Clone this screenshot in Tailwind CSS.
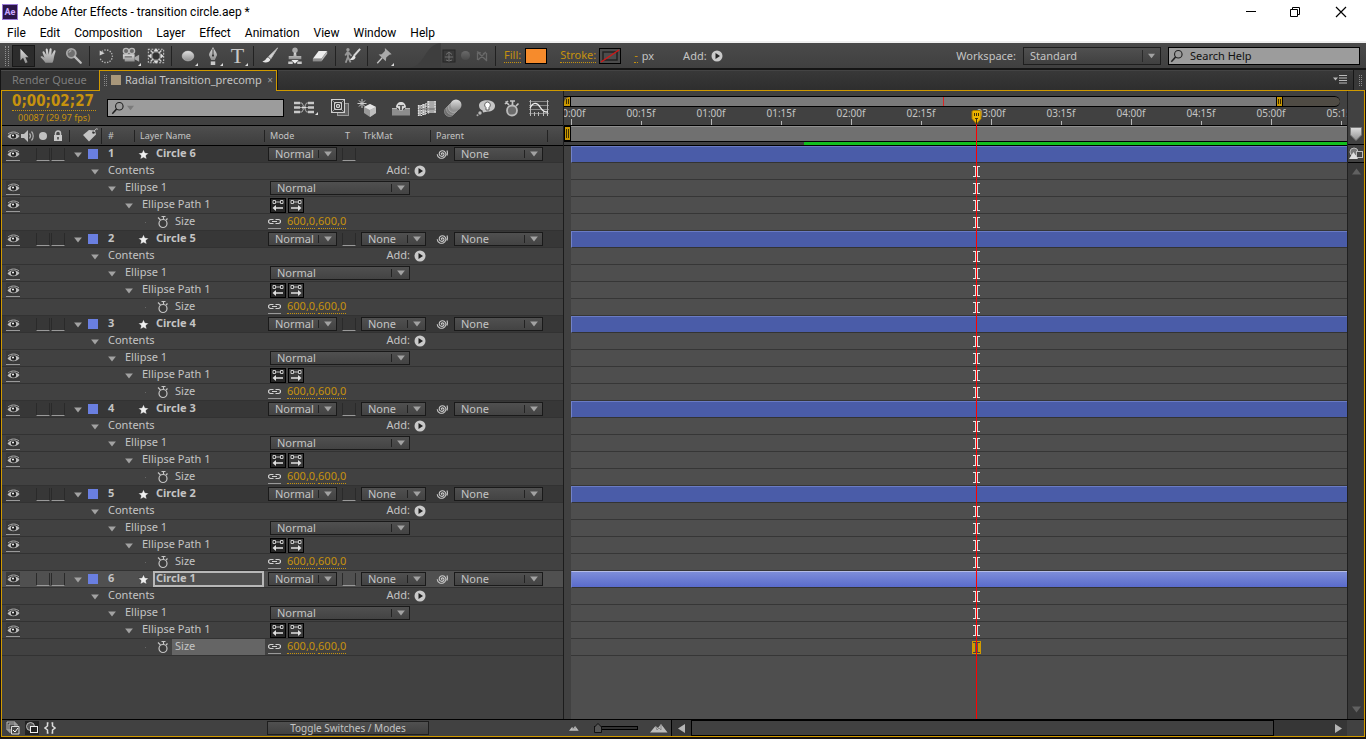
<!DOCTYPE html>
<html lang="en">
<head>
  <meta charset="UTF-8" />
  <meta name="viewport" content="width=device-width, initial-scale=1.0" />
  <title>Adobe After Effects - transition circle.aep *</title>
  <script src="https://cdn.jsdelivr.net/npm/@tailwindcss/browser@4"></script>
</head>
<body class="relative min-h-screen flex flex-col bg-[#171213] pb-[2px] text-[11px] leading-4 text-[#c4c4c4] font-['Noto_Sans','Open_Sans',sans-serif] overflow-x-hidden">

  <!-- icon sprite, kept rendered at zero size so the gradient stays usable -->
  <svg class="absolute w-0 h-0" aria-hidden="true">
    <defs>
      <linearGradient id="metal" x1="0" y1="0" x2="0" y2="1"><stop offset="0" stop-color="#dedede"/><stop offset="1" stop-color="#8f8f8f"/></linearGradient>
    </defs>
    <symbol id="i-arrow" viewBox="0 0 20 20"><path d="M6 2v13l3-3 2.500 6 2.500-1-2.500-5.500H15z" fill="url(#metal)"/></symbol>
    <symbol id="i-hand" viewBox="0 0 20 20"><path d="M6 17.500c-1-2-3.500-4-5.500-6.500 1-1.300 3-.3 4.500 1.200L2.800 6c0-1.400 1.600-1.700 2.200-.4L7 9 6.300 2.700c.2-1.500 2-1.400 2.300 0L9.700 8.500l1-6.300c.5-1.400 2.200-1 2.200.4L12.700 9l2.700-4.800c.8-1 2.200-.3 1.800 1-1 3.400-1.600 5-2 8.300-.2 1.600-.9 3-1.400 4z" fill="url(#metal)"/></symbol>
    <symbol id="i-zoom" viewBox="0 0 20 20"><circle cx="7" cy="7" r="5" fill="#6e6e6e" stroke="#a5a5a5" stroke-width="2"/><path d="M4.500 6c.5-1 1.500-1.700 2.500-1.700" stroke="#ddd" fill="none"/><path d="M11 11 17.500 17.500" stroke="#bdbdbd" stroke-width="2.600" stroke-linecap="round"/></symbol>
    <symbol id="i-rotate" viewBox="0 0 20 20"><path d="M5.500 5A7 7 0 1 1 3.300 12" fill="none" stroke="#b4b4b4" stroke-width="1.500" stroke-dasharray="1.500 1.500"/><path d="M3 9.500 3 4l5.500 3z" fill="#d0d0d0"/></symbol>
    <symbol id="i-camera" viewBox="0 0 20 20"><circle cx="4.500" cy="4.500" r="3" fill="#6a6a6a" stroke="#b8b8b8" stroke-width="1.500"/><circle cx="11" cy="4.500" r="3" fill="#6a6a6a" stroke="#b8b8b8" stroke-width="1.500"/><path d="M1 8h13v8H3v-2.500H1z" fill="url(#metal)"/><path d="m14 11.500 5-3v8l-5-3z" fill="#a9a9a9"/><path d="M3 11h8" stroke="#444"/></symbol>
    <symbol id="i-pan" viewBox="0 0 20 20"><rect x="1.500" y="2.500" width="17" height="15" fill="none" stroke="#c4c4c4" stroke-width="1.200" stroke-dasharray="2 1.500"/><circle cx="10" cy="10" r="4.500" fill="#333" stroke="#9a9a9a"/><path d="m10 1.500 3 3.500H7zM10 18.500l3-3.500H7zM1.500 10 5 7v6zM18.500 10 15 7v6z" fill="#ddd"/><path d="m4 4 3 3m9-3-3 3m-9 9 3-3m9 3-3-3" stroke="#ccc" stroke-width="1.500"/></symbol>
    <symbol id="i-ellipse" viewBox="0 0 20 20"><ellipse cx="10" cy="10" rx="6.500" ry="5.500" fill="url(#metal)" stroke="#d5d5d5" stroke-width=".5"/></symbol>
    <symbol id="i-pen" viewBox="0 0 20 20"><path d="M10 0c1 3 4.500 6 4.500 9L12 14.500H8L5.500 9c0-3 3.500-6 4.500-9z" fill="url(#metal)"/><path d="M10 2v7" stroke="#333"/><circle cx="10" cy="9.500" r="1.200" fill="#333"/><path d="M7.500 16h5v4h-5z" fill="#c9c9c9"/></symbol>
    <symbol id="i-brush" viewBox="0 0 20 20"><path d="M18.500 1 8.500 10.500l2.500 2.500z" fill="#d4d4d4" stroke="#bbb"/><path d="M8 11.500c-2.500.3-2.500 4-6.500 4.500 2.500 2 8 1.500 9-2z" fill="#e5e5e5"/></symbol>
    <symbol id="i-stamp" viewBox="0 0 20 20"><circle cx="10" cy="3.500" r="3" fill="#aaa"/><path d="M8.800 6h2.400l.5 4H17v3.500H3V10h5.300z" fill="url(#metal)"/><path d="M2.500 17.500h5m5 0h5" stroke="#c8c8c8" stroke-width="3"/><path d="m6 14.500 4 4 4-4z" fill="#eee"/></symbol>
    <symbol id="i-eraser" viewBox="0 0 20 20"><path d="M8.500 4.500H18L11.500 13H2z" fill="#ededed"/><path d="M2 13h9.500v3H2z" fill="#8e8e8e"/><path d="M11.500 13 18 4.500v3L11.500 16z" fill="#b5b5b5"/></symbol>
    <symbol id="i-roto" viewBox="0 0 20 20"><circle cx="5.500" cy="3" r="1.900" fill="#9b9b9b"/><path d="M5.500 5 2.500 9.500M5.500 5v6L3 17.500M5.500 11l3 6M6 6l3.500 4" stroke="#989898" stroke-width="2" fill="none"/><path d="m19 2-7 8" stroke="#d5d5d5" stroke-width="2.200"/><path d="M12.500 9.500c-2.500 0-2 3.500-5 4 2 1.800 6 1.200 6.500-2.300z" fill="#e3e3e3"/></symbol>
    <symbol id="i-pin" viewBox="0 0 20 20"><path d="m11 1 7.500 7-2.500.6-3.500 3.200-.5 4L4 8.300l3.500-.3 3.500-3.500z" fill="#aaa"/><path d="m8 12-5.500 6" stroke="#c4c4c4" stroke-width="1.500"/></symbol>
    <symbol id="i-anchor" viewBox="0 0 16 16"><rect x="2" y="2" width="12" height="12" fill="#393939" stroke="#272727"/><path d="M8 4v8M5 6.500l3-2.500 3 2.500M3.800 9h8.400M5 12l3 1 3-1" stroke="#707070" fill="none"/></symbol>
    <symbol id="i-unlink" viewBox="0 0 16 16"><path d="m3 3.500 10 9.500M4 12l8-8M3.500 5v7M12.500 5v7M4 4l3 1m5-1L9 6" stroke="#686868" stroke-width="1.300" fill="none"/></symbol>
    <symbol id="i-search" viewBox="0 0 16 16"><circle cx="9.500" cy="6" r="4.300" fill="none" stroke="#222" stroke-width="1.300"/><path d="m6.500 9-5 5.500" stroke="#222" stroke-width="1.700"/></symbol>
    <symbol id="i-play" viewBox="0 0 12 12"><circle cx="6" cy="6" r="5.500" fill="#c9c9c9"/><path d="M4.500 3 9 6 4.500 9z" fill="#222"/></symbol>
    <symbol id="i-flow" viewBox="0 0 24 20"><path d="M0 5h6M0 9.500h6M0 14h6M14 5h6M14 9.500h6M14 14h6" stroke="#c8c8c8" stroke-width="2.500"/><path d="M6 5h2l1.500 3M6 14h2l1.500-3M14 5h-1.500L11 8m3 6h-1.500L11 11M6 9.500h8" stroke="#aaa" fill="none"/><path d="M8 8.500h4v2H8z" fill="#ddd"/><path d="M24 14v3h-3z" fill="#ddd"/></symbol>
    <symbol id="i-comps" viewBox="0 0 20 20"><rect x="7.500" y="5.500" width="11" height="12" fill="#606060" stroke="#999"/><rect x="1.500" y="1.500" width="13" height="13" fill="#3c3c3c" stroke="#d0d0d0"/><rect x="4.500" y="4.500" width="7" height="7" fill="none" stroke="#d0d0d0"/><path d="m2 2 12 12m0-12L2 14" stroke="#aaa" stroke-width=".7"/><circle cx="8" cy="8" r="1.500" fill="#3c3c3c" stroke="#eee"/></symbol>
    <symbol id="i-cube" viewBox="0 0 20 20"><path d="M5 1v9M.5 5.500h9M2 2.500l6 6m0-6-6 6" stroke="#ccc"/><path d="m13 6 6 3v6l-6 4-6-4V9z" fill="#9a9a9a"/><path d="m13 6 6 3-6 3-6-3z" fill="#e4e4e4"/><path d="m13 12 6-3v6l-6 4z" fill="#bdbdbd"/></symbol>
    <symbol id="i-shy" viewBox="0 0 20 20"><path d="M1 10h4.500c1 3 8 3 9 0H19v7.500H1z" fill="#8d8d8d"/><path d="M1 10.500h5M14 10.500h5" stroke="#b5b5b5"/><path d="M5 9.500c0-7.500 10-7.500 10 0-2 .3-3 1-3.500 3h-3C8 10.500 7 9.800 5 9.500z" fill="#dcdcdc"/><path d="M10 7v5" stroke="#333" stroke-width="1.500"/><circle cx="8" cy="7.500" r=".8" fill="#333"/><circle cx="12" cy="7.500" r=".8" fill="#333"/></symbol>
    <symbol id="i-film" viewBox="0 0 20 20"><path d="M1 7h3v11H1zM5 6h4v11H5zM10 3h9v12h-9z" fill="#a8a8a8"/><path d="M1.500 7v11M4.500 7v11M6.500 6v11M9 5v11M11.500 3v13M18 3v12" stroke="#e3e3e3" stroke-width="1.300" stroke-dasharray="1.500 1"/><path d="M2 11h16" stroke="#555" stroke-width=".8"/></symbol>
    <symbol id="i-blur" viewBox="0 0 20 20"><circle cx="6.500" cy="13.500" r="5" fill="#6d6d6d" stroke="#999" stroke-width=".7"/><circle cx="8.500" cy="11.500" r="5" fill="#808080" stroke="#a5a5a5" stroke-width=".7"/><circle cx="10.500" cy="9.500" r="5" fill="#909090" stroke="#b5b5b5" stroke-width=".7"/><circle cx="13" cy="7" r="5.500" fill="url(#metal)"/></symbol>
    <symbol id="i-brain" viewBox="0 0 20 20"><path d="M3 7.500c0-7 15.500-7 16 0 .2 4-3.500 6-7 6l-5 1-.5-2C4.500 12 3 10 3 7.500z" fill="#c6c6c6"/><path d="M11.500 4a3 3 0 0 1 1.500 5.500V12h-3V9.500A3 3 0 0 1 11.500 4z" fill="#fff" stroke="#444" stroke-width=".8"/><circle cx="4" cy="15" r="1.700" fill="#bbb"/><circle cx="1.500" cy="17.300" r="1" fill="#aaa"/></symbol>
    <symbol id="i-watch" viewBox="0 0 20 20"><circle cx="10" cy="12.500" r="5" fill="#6c6c6c" stroke="#bbb" stroke-width="1.800"/><path d="M8 3h5M10.500 3v4M3.500 3.500 7 7M14 8l2.500-2.500M3 6l3-3" stroke="#c4c4c4" stroke-width="1.700"/></symbol>
    <symbol id="i-stopwatch" viewBox="0 0 14 14"><circle cx="7" cy="8.500" r="4" fill="#3a3a3a" stroke="#c4c4c4" stroke-width="1.200"/><path d="M5.500 1.500h4M7.500 1.500V4M2 2.500l2.500 2.500M10 5l1.500-1.500" stroke="#c4c4c4" stroke-width="1.200"/></symbol>
    <symbol id="i-graph" viewBox="0 0 20 20"><path d="M0 3.500h20M0 7.500h20M0 11.500h20M0 15.500h20" stroke="#888"/><path d="M1.500 2v16M5.500 14v4m4-4v4m5-4v4m4-16v16" stroke="#bbb"/><path d="M1 10C4 4 8 4 11 9s5 5 8 5" fill="none" stroke="#eee" stroke-width="1.400"/></symbol>
    <symbol id="i-eye" viewBox="0 0 13 10"><path d="M.5 5.500C3 1.500 9 .8 12.500 5 9.500 9 4 9.500.5 5.500z" fill="#bdbdbd"/><circle cx="6.500" cy="5" r="2.600" fill="#222"/><circle cx="6" cy="4.500" r="1" fill="#fff"/><path d="M1 3C4 .5 9 .2 12 3" fill="none" stroke="#aaa"/></symbol>
    <symbol id="i-speaker" viewBox="0 0 13 12"><path d="M0 4h3l4-4v12L3 8H0z" fill="#c0c0c0"/><path d="M8.500 3.500c1.300 1.500 1.300 3.500 0 5M10.500 1.500c2.300 2.500 2.300 6.500 0 9" fill="none" stroke="#b0b0b0" stroke-width="1.200"/></symbol>
    <symbol id="i-lock" viewBox="0 0 10 12"><path d="M2.500 6V3.500a2.500 2.500 0 0 1 5 0V6" fill="none" stroke="#c0c0c0" stroke-width="1.500"/><path d="M1 5h8v6H1z" fill="#c8c8c8"/><path d="M5 7v2.500" stroke="#333" stroke-width="1.400"/></symbol>
    <symbol id="i-tag" viewBox="0 0 16 14"><path d="M1 7 7 2l6 .5 1 4-7 7z" fill="#c4c4c4"/><circle cx="11.500" cy="4.500" r="1.300" fill="#333"/><path d="M12 4c1-3 3-4 4-2.500" stroke="#ccc" fill="none"/></symbol>
    <symbol id="i-star" viewBox="0 0 12 12"><path d="m6 .5 1.600 3.600 4 .4-3 2.700.9 4L6 9.200l-3.500 2 .9-4-3-2.700 4-.4z" fill="#efefef" stroke="#222" stroke-width=".4"/></symbol>
    <symbol id="i-down" viewBox="0 0 9 7"><path d="M0 .5h9L4.500 6.500z" fill="#a2a2a2"/></symbol>
    <symbol id="i-whip" viewBox="0 0 12 12"><path d="M6.300 6.300c-1 .5-1.500-1-.3-1.400 1.500-.3 2.500 1.300 1.700 2.500-1.100 1.600-4 1-4.400-1C2.900 4.200 4.700 2.600 6.700 2.800c2.400.3 3.700 2.500 3 4.600-.8 2.400-3.700 3.400-5.900 2.500C2.300 9.200 1.300 7.800 1.200 6.200M11 2.500c.6 1.800.5 3.600 0 5" fill="none" stroke="#cacaca" stroke-width="1.100"/></symbol>
    <symbol id="i-link" viewBox="0 0 13 7"><path d="M5.500 1.500h-3a2 2 0 0 0 0 4h3M7.500 1.500h3a2 2 0 0 1 0 4h-3M4 3.500h5" fill="none" stroke="#d0d0d0" stroke-width="1.200"/></symbol>
    <symbol id="i-pathl" viewBox="0 0 12 11"><path d="M3 2h6" stroke="#c8c8c8"/><path d="M1 .5h2.500v3H1zM8.500.5H11v3H8.500z" fill="#222" stroke="#c8c8c8"/><path d="M2 8h9" stroke="#e0e0e0" stroke-width="1.500"/><path d="M4 5v6L.5 8z" fill="#e0e0e0"/></symbol>
    <symbol id="i-pathr" viewBox="0 0 12 11"><path d="M3 2h6" stroke="#c8c8c8"/><path d="M1 .5h2.500v3H1zM8.500.5H11v3H8.500z" fill="#222" stroke="#c8c8c8"/><path d="M1 8h9" stroke="#e0e0e0" stroke-width="1.500"/><path d="M8 5v6l3.500-3z" fill="#e0e0e0"/></symbol>
    <symbol id="i-beam" viewBox="0 0 7 11"><path d="M0 .5h7M0 10.500h7" stroke="#e6e6e6"/><path d="M2.500 1v9m2-9v9" stroke="#dcdcdc"/></symbol>
    <symbol id="i-beamkey" viewBox="0 0 9 13"><path d="M0 0h9v13H0z" fill="#d09a00"/><path d="M1 1.500h7M1 11.500h7" stroke="#444"/><path d="M3.500 2v9m2-9v9" stroke="#555"/></symbol>
    <symbol id="i-mountain" viewBox="0 0 18 9"><path d="M0 8.500 5.500 2 8 4l3-4 6.500 8.500z" fill="#bcbcbc"/><path d="m5.500 2 1.500 4 2-2 2 2 0-6" fill="none" stroke="#777" stroke-width=".8"/></symbol>
  </svg>

  <!-- title bar -->
  <header class="bg-white text-black text-[12px] font-['Roboto','Open_Sans',sans-serif]">
    <div class="flex items-center h-[23px] pl-[2px]">
      <div class="w-4 h-4 bg-[#2b1648] border border-[#9a7bd6] text-[#c9a6ff] text-[9px] leading-[14px] font-bold text-center">Ae</div>
      <h1 class="ml-[5px]">Adobe After Effects - transition circle.aep *</h1>
      <div class="ml-auto flex items-center pr-[17px] gap-8">
        <button aria-label="Minimize"><svg class="size-3" viewBox="0 0 12 12"><path d="M1 5.500h10" stroke="#000"/></svg></button>
        <button aria-label="Restore"><svg class="size-3" viewBox="0 0 12 12"><path d="M1.500 3.500h7v7h-7zM3.500 3.500v-2h7v7h-2" fill="none" stroke="#000"/></svg></button>
        <button aria-label="Close"><svg class="size-4" viewBox="0 0 16 16"><path d="m3 3 10 10M13 3 3 13" stroke="#000" stroke-width="1.200"/></svg></button>
      </div>
    </div>
    <nav class="flex h-[20px] pl-[7px] gap-[14px] leading-5 border-b-2 border-[#f0f0f0]">
      <a href="#">File</a><a href="#">Edit</a><a href="#">Composition</a><a href="#">Layer</a><a href="#">Effect</a><a href="#">Animation</a><a href="#">View</a><a href="#">Window</a><a href="#">Help</a>
    </nav>
  </header>

  <!-- tools -->
  <div id="toolbar" class="flex items-center h-[25px] bg-linear-to-b from-[#4a4a4a] to-[#404040] pl-[5px] pr-[6px] text-[11px]">
    <div class="w-[4px] h-5 mr-[2px] border-x border-dotted border-[#909090]"></div>
    <div id="tools" class="flex items-center"></div>
    <svg class="w-[45px] h-[25px] shrink-0" viewBox="0 0 45 25"><path d="M14 25C30 22 28 2 45 0v25z" fill="#3e3e3e"/></svg>
    <svg class="size-4"><use href="#i-anchor"/></svg>
    <div class="size-[9px] mx-[4px] rounded-full bg-linear-to-b from-[#6a6a6a] to-[#4a4a4a]"></div>
    <svg class="size-4"><use href="#i-unlink"/></svg>
    <div class="w-px h-5 ml-[5px] mr-[8px] bg-[#202020]"></div>
    <button class="leading-[14px] text-[#c6920e] border-b border-dotted border-[#c6920e]">Fill:</button>
    <button class="w-[22px] h-4 ml-[4px] bg-[#f68b2c] border border-black" aria-label="Fill colour"></button>
    <button class="ml-[13px] leading-[14px] text-[#c6920e] border-b border-dotted border-[#c6920e]">Stroke:</button>
    <button class="w-[22px] h-4 ml-[3px] border border-black bg-[#4c4c4c]" aria-label="Stroke colour"><svg class="w-5 h-[14px]" viewBox="0 0 20 14"><path d="M3 3h14v8H3z" fill="none" stroke="#222" stroke-width="1.500"/><path d="M1 13 19 1" stroke="#d01818" stroke-width="1.500"/></svg></button>
    <span class="ml-[13px] leading-[14px] text-[#c6920e] border-b border-dotted border-[#c6920e]">-</span>
    <span class="ml-[4px]">px</span>
    <span class="ml-[29px]">Add:</span>
    <button class="ml-[4px] size-3" aria-label="Add"><svg class="size-3"><use href="#i-play"/></svg></button>
    <label for="workspace" class="ml-auto mr-[7px]">Workspace:</label>
    <div class="relative w-[138px] h-[18px] border border-[#1e1e1e] bg-linear-to-b from-[#505050] to-[#404040]">
      <select id="workspace" class="appearance-none w-full h-4 leading-4 pl-[6px]"><option>Standard</option></select>
      <svg class="absolute right-[5px] top-[5px] w-[7px] h-[6px] pointer-events-none"><use href="#i-down"/></svg>
      <span class="absolute right-[17px] top-[2px] h-3 w-px bg-[#2a2a2a]"></span>
    </div>
    <div class="flex items-center w-[192px] h-[18px] ml-[7px] pl-[1px] border border-black bg-[#9c9c9c]">
      <svg class="size-[14px]"><use href="#i-search"/></svg>
      <input type="text" value="Search Help" aria-label="Search Help" class="flex-1 min-w-0 h-4 ml-[6px] text-[#111] text-[11px]" />
    </div>
  </div>

  <!-- panel tabs -->
  <div class="flex items-stretch h-[22px] pt-[2px] pl-px bg-[#151515] leading-[18px]">
    <button class="w-[98px] px-[11px] pb-[2px] text-left bg-[#343434] text-[#7d7d7d] border-t border-[#4a4a4a]">Render Queue</button>
    <div class="relative flex items-center w-[178px] h-[21px] shrink-0 pl-[4px] pb-[2px] border border-b-0 border-[#d09a00] bg-[#414141]">
      <span class="w-[3px] h-[11px] border-x border-dotted border-[#8a8a8a]"></span>
      <span class="size-[10px] ml-[4px] mr-[4px] bg-[#a8977a]"></span>
      <span class="whitespace-nowrap">Radial Transition_precomp</span>
      <button class="ml-auto mr-[3px] text-[#9a9a9a] text-[10px]" aria-label="Close tab">×</button>
    </div>
    <div class="flex-1 flex items-center justify-end ml-px mr-px pr-[6px] pb-[2px] bg-linear-to-b from-[#383838] to-[#2e2e2e] border-t border-[#444]">
      <button aria-label="Panel menu"><svg class="w-[14px] h-[9px]" viewBox="0 0 14 9"><path d="M0 2.500h5L2.500 5.500z" fill="#bbb"/><path d="M6 .5h8M6 3h8M6 5.500h8M6 8h8" stroke="#bbb"/></svg></button>
    </div>
    <div class="w-[12px] flex items-center justify-center bg-[#383838]"><span class="w-[3px] h-[11px] border-x border-dotted border-[#8a8a8a]"></span></div>
  </div>

  <!-- timeline panel -->
  <main class="flex-1 flex flex-col mx-px border border-[#d09a00] bg-[#414141]">
    <div class="flex-1 flex">
      <section class="w-[562px] shrink-0 flex flex-col border-r border-[#1c1c1c]">
        <div class="flex items-center h-[35px] border-b border-black">
          <div class="w-[105px] pl-[10px] text-[#c6920e]">
            <div class="w-[84px] h-[18px] text-[15px] leading-[17px] font-bold font-['DejaVu_Sans_Condensed','DejaVu_Sans',sans-serif] border-b border-dotted border-[#c6920e] whitespace-nowrap">0;00;02;27</div>
            <div class="w-[84px] text-[9px] leading-[13px] text-center whitespace-nowrap">00087 (29.97 fps)</div>
          </div>
          <label class="flex items-center w-[177px] h-[18px] pl-[3px] border border-black bg-[#9c9c9c]">
            <svg class="size-[14px]"><use href="#i-search"/></svg>
            <svg class="w-[7px] h-[6px] ml-[2px] brightness-75"><use href="#i-down"/></svg>
            <input type="text" aria-label="Search layers" class="flex-1 min-w-0 h-4 px-1" />
          </label>
          <button class="ml-[10px]" aria-label="Mini-flowchart"><svg class="w-6 h-5"><use href="#i-flow"/></svg></button>
          <button class="ml-[12px]" aria-label="Live update"><svg class="size-5"><use href="#i-comps"/></svg></button>
          <button class="ml-[7px]" aria-label="Draft 3D"><svg class="size-5"><use href="#i-cube"/></svg></button>
          <button class="ml-[14px]" aria-label="Shy"><svg class="size-5"><use href="#i-shy"/></svg></button>
          <button class="ml-[6px]" aria-label="Frame blending"><svg class="size-5"><use href="#i-film"/></svg></button>
          <button class="ml-[6px]" aria-label="Motion blur"><svg class="size-5"><use href="#i-blur"/></svg></button>
          <button class="ml-[13px]" aria-label="Brainstorm"><svg class="size-5"><use href="#i-brain"/></svg></button>
          <button class="ml-[6px]" aria-label="Auto-keyframe"><svg class="size-5"><use href="#i-watch"/></svg></button>
          <button class="ml-[7px]" aria-label="Graph editor"><svg class="size-5"><use href="#i-graph"/></svg></button>
        </div>
        <div class="flex items-center h-[20px] text-[9px] border-b border-black bg-linear-to-b from-[#4e4e4e] to-[#3e3e3e]">
          <div class="w-[68px] h-3 flex items-center pl-[5px] border-r border-[#222]">
            <svg class="w-[13px] h-[10px]"><use href="#i-eye"/></svg>
            <svg class="w-[13px] h-3 ml-px"><use href="#i-speaker"/></svg>
            <span class="size-[8px] rounded-full bg-[#c0c0c0] ml-[5px]"></span>
            <svg class="w-[10px] h-3 ml-[6px]"><use href="#i-lock"/></svg>
          </div>
          <div class="w-[32px] h-4 flex justify-end pr-[3px] border-r border-[#222]"><svg class="w-4 h-[14px]"><use href="#i-tag"/></svg></div>
          <div class="w-[33px] leading-3 pl-[6px] border-r border-[#222]">#</div>
          <div class="w-[130px] leading-3 pl-[5px] border-r border-[#222]">Layer Name</div>
          <div class="w-[80px] leading-3 pl-[5px]">Mode</div>
          <div class="w-[16px] leading-3">T</div>
          <div class="w-[70px] leading-3 pl-[2px] border-r border-[#222]">TrkMat</div>
          <div class="w-[117px] leading-3 pl-[5px] border-r border-[#222]">Parent</div>
        </div>
        <div id="outline"></div>
      </section>

      <section class="relative flex-1 min-w-0 flex flex-col overflow-hidden">
        <!-- time navigator -->
        <div class="flex h-[11px] mt-[5px] mr-[7px] border-y border-black bg-[#4f4b44] rounded-r-md">
          <span class="w-[7px] rounded-tl-md bg-[#c99700] border-r border-black flex justify-center gap-px py-[2px]"><i class="w-px bg-black/70"></i><i class="w-px bg-black/70"></i></span>
          <span class="flex-1 bg-[#7a7a7a] flex"><i class="ml-auto w-px mr-[332px] bg-[#d22]"></i></span>
          <span class="w-[7px] bg-[#c99700] border-x border-black flex justify-center gap-px py-[2px]"><i class="w-px bg-black/70"></i><i class="w-px bg-black/70"></i></span>
          <span class="w-[57px]"></span>
        </div>
        <div id="ruler" class="flex h-[19px] border-b border-black pl-[7px]"></div>
        <!-- work area -->
        <div class="flex h-[16px] border-b border-black">
          <span class="w-[7px] bg-[#c99700] border border-black flex justify-center gap-px py-[2px]"><i class="w-px bg-black/70"></i><i class="w-px bg-black/70"></i></span>
          <span class="flex-1 bg-[#707070] border-t border-[#8e8e8e]"></span>
        </div>
        <div class="h-[4px] border-b border-black flex"><span class="flex-1 ml-[240px] bg-[#12bf1e]"></span></div>
        <div class="flex-1 pl-[7px]"><div id="tracks" class="h-full bg-[#4e4e4e]"></div></div>
        <!-- current time -->
        <div class="absolute left-[412px] top-[33px] bottom-0 w-px bg-[#f00]"></div>
        <svg class="absolute left-[407px] top-[19px] w-[11px] h-[15px]" viewBox="0 0 11 15"><path d="M1 1.500 2 .5h7l1 1v7L5.500 14 1 8.500z" fill="#eeb600" stroke="#a87b00"/><path d="M3.500 3v3m2-3v3m2-3v3M4 8.500h3M5.500 8.500V14" stroke="#43300a"/></svg>
      </section>

      <aside class="w-[17px] shrink-0 flex flex-col border-l border-[#202020]">
        <div class="h-[54px] flex items-end justify-center pb-[3px] border-b border-black">
          <svg class="w-3 h-[14px]" viewBox="0 0 12 14"><path d="M.5.500h11V8L6 13.500.5 8z" fill="url(#metal)" stroke="#777"/></svg>
        </div>
        <div class="h-[18px] flex items-center justify-center border-b border-black">
          <svg class="w-[14px] h-[13px]" viewBox="0 0 14 13"><circle cx="5" cy="5" r="4" fill="#777" stroke="#bbb"/><rect x="7.500" y="4.500" width="6" height="6" fill="#444" stroke="#bbb"/><path d="M0 12 4.500 5 9 12z" fill="#ddd"/></svg>
        </div>
        <div class="flex-1 flex flex-col items-center justify-between bg-[#383838] pt-[5px] pb-[6px]">
          <svg class="w-[9px] h-[7px] rotate-180 brightness-60"><use href="#i-down"/></svg>
          <svg class="w-[9px] h-[7px] brightness-60"><use href="#i-down"/></svg>
        </div>
      </aside>
    </div>

    <!-- status strip -->
    <footer class="flex items-center h-[17px] border-t border-black">
      <div class="w-[265px] flex items-center gap-[5px] pl-[4px]">
        <button aria-label="Layer switches"><svg class="size-[14px]" viewBox="0 0 14 14"><path d="M1 1h8v8H1zM3 3h8v8H3z" fill="#444" stroke="#bbb"/><path d="M5.500 5.500h7.500V13H5.500z" fill="#444" stroke="#ddd"/><path d="m7 9 2 2 3-4" fill="none" stroke="#fff"/></svg></button>
        <button class="bg-[#222]" aria-label="Transfer controls"><svg class="size-[14px]" viewBox="0 0 14 14"><circle cx="5.500" cy="5.500" r="4" fill="#555" stroke="#bbb"/><rect x="5.500" y="5.500" width="7" height="6" fill="#222" stroke="#eee"/></svg></button>
        <button aria-label="In/Out"><svg class="w-[12px] h-[12px]" viewBox="0 0 12 12"><path d="M4.500 1H3.500v3L1 6l2.500 2v3h1M7.500 1h1v3L11 6 8.500 8v3h-1" fill="none" stroke="#ddd" stroke-width="1.500"/></svg></button>
      </div>
      <button class="w-[162px] h-[14px] text-[10px] leading-3 border border-[#1e1e1e] bg-linear-to-b from-[#505050] to-[#404040]">Toggle Switches / Modes</button>
      <div class="w-[240px] flex items-center justify-end pr-px">
        <svg class="w-[10px] h-[5px]"><use href="#i-mountain"/></svg>
        <div class="relative w-[44px] h-[10px] ml-[15px] mr-[12px] flex items-center"><span class="w-full h-[4px] border border-black bg-[#333]"></span>
          <svg class="absolute left-0 top-0 w-[8px] h-[10px]" viewBox="0 0 8 10"><path d="M.5 9.500V4L4 .5 7.500 4v5.500z" fill="#555" stroke="#111"/></svg></div>
        <svg class="w-[18px] h-[9px]"><use href="#i-mountain"/></svg>
      </div>
      <div class="flex-1 h-full flex items-center ml-[2px] mr-[17px] bg-[#363636] border-l border-black">
        <svg class="w-[7px] h-[9px] mx-[6px]" viewBox="0 0 7 9"><path d="M7 0v9L0 4.500z" fill="#b5b5b5"/></svg>
        <span class="flex-1 h-full bg-[#414141] border border-black"></span>
        <svg class="w-[7px] h-[9px] ml-[61px] mr-[5px]" viewBox="0 0 7 9"><path d="M0 0v9l7-4.500z" fill="#b5b5b5"/></svg>
      </div>
    </footer>
  </main>

  <script>
    // "|" is a divider, a trailing "+" marks a tool with a flyout
    const tools = ["arrow", "hand", "zoom", "|", "rotate", "camera+", "pan", "|", "ellipse+", "pen+", "T+", "|", "brush", "stamp", "eraser", "|", "roto", "|", "pin+"];
    const layers = ["Circle 6", "Circle 5", "Circle 4", "Circle 3", "Circle 2", "Circle 1"];
    const times = ["00:00f", "00:15f", "01:00f", "01:15f", "02:00f", "02:15f", "03:00f", "03:15f", "04:00f", "04:15f", "05:00f", "05:15f"];

    document.getElementById("tools").innerHTML = tools.map(t => {
      if (t === "|") return `<span class="w-px h-5 mx-[3px] bg-[#222]"></span>`;
      const name = t.replace("+", "");
      const active = name === "arrow" ? "bg-[#2c2c2c] outline outline-[#181818]" : "";
      const flyout = t.endsWith("+") ? `<svg class="absolute right-0 bottom-0 size-[3px]" viewBox="0 0 3 3"><path d="M3 0v3H0z" fill="#ddd"/></svg>` : "";
      const icon = name === "T"
        ? `<span class="text-[22px] leading-5 font-['Liberation_Serif',serif] text-[#c8c8c8]">T</span>`
        : `<svg class="size-[18px]"><use href="#i-${name}"/></svg>`;
      return `<button class="relative w-[21px] h-5 mx-[2px] flex items-center justify-center ${active}" aria-label="${name} tool">${icon}${flyout}</button>`;
    }).join("");

    function dropdown(label, value, width) {
      return `<div class="relative ${width} h-[14px] shrink-0 border border-[#1a1a1a] bg-linear-to-b from-[#505050] to-[#434343]">
        <select aria-label="${label}" class="block appearance-none w-full h-3 leading-3 pl-[6px] pb-[2px]"><option>${value}</option></select>
        <span class="absolute right-[17px] top-[2px] h-2 w-px bg-[#222]"></span>
        <svg class="absolute right-[4px] top-[3px] w-[8px] h-[6px] pointer-events-none"><use href="#i-down"/></svg></div>`;
    }

    const eye = `<button class="w-[14px] h-[14px] flex items-center justify-center border-b border-[#999] bg-[#3a3a3a]" aria-label="Visibility"><svg class="w-[13px] h-[10px]"><use href="#i-eye"/></svg></button>`;
    const twirl = `<svg class="w-[8px] h-[6px] mt-px shrink-0"><use href="#i-down"/></svg>`;
    const box = `<span class="w-[14px] h-[13px] border-b border-b-[#999] border-x border-x-[#2a2a2a]"></span>`;

    function row({ bg = "", visible = true, switches = "", indent, name, value }) {
      return `<div class="flex items-center h-[17px] border-b border-[#323232] ${bg}">
        <div class="w-[34px] pl-[4px]">${visible ? eye : ""}</div>
        <div class="w-[38px] flex gap-px">${switches}</div>
        <div class="w-[194px] h-4 flex items-center ${indent}">${name}</div>
        ${value}
      </div>`;
    }

    document.getElementById("outline").innerHTML = layers.map((layer, i) => {
      const selected = i === layers.length - 1;
      const title = selected
        ? `<span class="w-[111px] h-4 ml-[4px] pl-px leading-[10px] font-bold border-2 border-[#b8b8b8]">${layer}</span>`
        : `<span class="ml-[7px] pb-[2px] leading-[14px] font-bold">${layer}</span>`;
      return row({
        bg: selected ? "bg-[#505050]" : "bg-[#373737]",
        switches: box + box,
        indent: "",
        name: `${twirl}<span class="size-[10px] ml-[6px] bg-[#6a7fe0] shrink-0"></span><span class="w-[40px] pl-[10px] pb-[2px] leading-[14px] font-bold shrink-0">${i + 1}</span><svg class="size-[11px] mt-px shrink-0"><use href="#i-star"/></svg>${title}`,
        value: dropdown("Mode", "Normal", "w-[69px]")
          + `<span class="w-[14px] h-[13px] ml-[5px] mr-[5px] border-b border-b-[#999] border-x border-x-[#2a2a2a]"></span>`
          + (i ? dropdown("Track matte", "None", "w-[65px]") : `<span class="w-[65px]"></span>`)
          + `<svg class="w-3 h-3 ml-[10px] mr-[6px]"><use href="#i-whip"/></svg>`
          + dropdown("Parent", "None", "w-[89px]"),
      }) + row({
        visible: false, indent: "pl-[17px]",
        name: `${twirl}<span class="ml-[9px] pb-[2px] leading-[14px]">Contents</span>`,
        value: `<span class="w-[142px] pb-[2px] leading-[14px] text-right">Add:</span><button class="ml-[4px]" aria-label="Add"><svg class="size-3"><use href="#i-play"/></svg></button>`,
      }) + row({
        indent: "pl-[34px]",
        name: `${twirl}<span class="ml-[9px] pb-[2px] leading-[14px]">Ellipse 1</span>`,
        value: `<span class="w-[2px]"></span>` + dropdown("Blend mode", "Normal", "w-[140px]"),
      }) + row({
        indent: "pl-[51px]",
        name: `${twirl}<span class="ml-[9px] pb-[2px] leading-[14px]">Ellipse Path 1</span>`,
        value: `<button class="w-4 h-[15px] ml-[2px] mr-[2px] flex items-center justify-center border border-black bg-[#262626]" aria-label="Path direction reversed"><svg class="w-3 h-[11px]"><use href="#i-pathl"/></svg></button>
          <button class="w-4 h-[15px] flex items-center justify-center border border-black bg-[#3a3a3a]" aria-label="Path direction forward"><svg class="w-3 h-[11px]"><use href="#i-pathr"/></svg></button>`,
      }) + row({
        visible: false, indent: "pl-[71px]",
        name: `<span class="size-px bg-[#666]"></span><svg class="size-[14px] ml-[10px] shrink-0"><use href="#i-stopwatch"/></svg><span class="h-4 flex-1 ml-[2px] mr-[3px] pl-[3px] leading-[14px] ${selected ? "bg-[#656565]" : ""}">Size</span>`,
        value: `<button class="w-[13px] h-[14px] flex items-center border-b border-[#999]" aria-label="Constrain proportions"><svg class="w-[13px] h-[7px]"><use href="#i-link"/></svg></button>
          <span class="h-4 ml-[6px] leading-[14px] text-[#c6920e]"><a href="#" class="inline-block h-[15px] border-b border-dotted">600,0</a>,<a href="#" class="inline-block h-[15px] border-b border-dotted">600,0</a></span>`,
      });
    }).join("");

    document.getElementById("ruler").innerHTML = times.map((t, i) =>
      `<div class="w-[70px] shrink-0 flex flex-col justify-between items-start text-[10px]">
        <span class="w-[28px] -ml-[14px] h-3 leading-3 flex justify-center whitespace-nowrap">${t}</span>
        <span class="w-px bg-[#b5b5b5] ${i % 2 ? "h-1" : "h-[6px]"}"></span></div>`).join("");

    document.getElementById("tracks").innerHTML = layers.map((layer, i) => {
      const selected = i === layers.length - 1;
      const bar = selected
        ? "bg-linear-to-b from-[#7d8dd8] to-[#5a6bcc] border-t-[#b4bce6]"
        : "bg-[#4a5ca8] border-t-[#6a7bc4]";
      const beams = [1, 2, 3, 4].map(n => selected && n === 4
        ? `<div class="h-[17px] border-b border-[#363636] flex items-center pl-[401px]"><svg class="w-[9px] h-[13px]"><use href="#i-beamkey"/></svg></div>`
        : `<div class="h-[17px] border-b border-[#363636] flex items-center pl-[402px]"><svg class="w-[7px] h-[11px]"><use href="#i-beam"/></svg></div>`).join("");
      return `<div class="h-[17px] border-b border-b-[#333] border-t border-l border-l-[#7282c8] ${bar}"></div>${beams}`;
    }).join("");
  </script>
</body>
</html>
